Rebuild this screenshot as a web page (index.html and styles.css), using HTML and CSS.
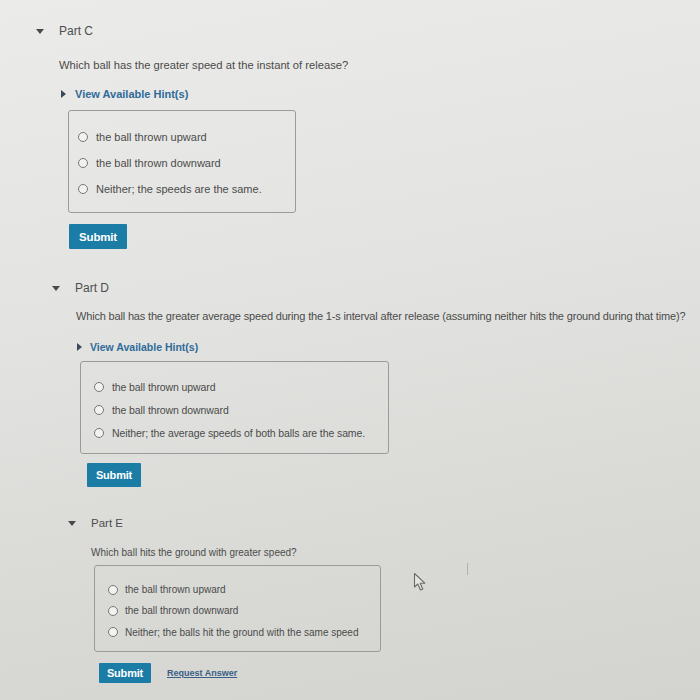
FILE: index.html
```html
<!DOCTYPE html>
<html>
<head>
<meta charset="utf-8">
<link rel="stylesheet" href="styles.css">
</head>
<body>
<div class="page">
  <section class="part part-c">
    <div class="part-head"><span class="caret"></span><span class="part-title">Part C</span></div>
    <div class="part-body">
      <p class="question">Which ball has the greater speed at the instant of release?</p>
      <div class="hint"><span class="hint-arrow"></span><span class="hint-text">View Available Hint(s)</span></div>
      <div class="choices">
        <label class="choice"><span class="radio"></span><span>the ball thrown upward</span></label>
        <label class="choice"><span class="radio"></span><span>the ball thrown downward</span></label>
        <label class="choice"><span class="radio"></span><span>Neither; the speeds are the same.</span></label>
      </div>
      <div class="actions"><button class="submit">Submit</button></div>
    </div>
  </section>

  <section class="part part-d">
    <div class="part-head"><span class="caret"></span><span class="part-title">Part D</span></div>
    <div class="part-body">
      <p class="question">Which ball has the greater average speed during the 1-s interval after release (assuming neither hits the ground during that time)?</p>
      <div class="hint"><span class="hint-arrow"></span><span class="hint-text">View Available Hint(s)</span></div>
      <div class="choices">
        <label class="choice"><span class="radio"></span><span>the ball thrown upward</span></label>
        <label class="choice"><span class="radio"></span><span>the ball thrown downward</span></label>
        <label class="choice"><span class="radio"></span><span>Neither; the average speeds of both balls are the same.</span></label>
      </div>
      <div class="actions"><button class="submit">Submit</button></div>
    </div>
  </section>

  <section class="part part-e">
    <div class="part-head"><span class="caret"></span><span class="part-title">Part E</span></div>
    <div class="part-body">
      <p class="question">Which ball hits the ground with greater speed?</p>
      <div class="choices">
        <label class="choice"><span class="radio"></span><span>the ball thrown upward</span></label>
        <label class="choice"><span class="radio"></span><span>the ball thrown downward</span></label>
        <label class="choice"><span class="radio"></span><span>Neither; the balls hit the ground with the same speed</span></label>
      </div>
      <div class="actions"><button class="submit">Submit</button><a class="request">Request Answer</a></div>
    </div>
  </section>

  <svg class="cursor" width="14" height="20" viewBox="0 0 14 20"><path d="M1.5 1.5 L1.5 15 L4.8 12 L7.5 18 L9.8 17 L7.2 11.2 L11.8 11.2 Z" fill="#e4e5e2" stroke="#6a6b6a" stroke-width="1.1" stroke-linejoin="round"/></svg>
  <span class="tick"></span>
</div>
</body>
</html>
```

FILE: styles.css
```css
html, body {
  margin: 0;
  padding: 0;
}
body {
  width: 700px;
  height: 700px;
  overflow: hidden;
  background: linear-gradient(170deg, #ebebe9 0%, #e3e4e1 40%, #d9dad6 75%, #d3d4d0 100%);
  font-family: "Liberation Sans", Arial, sans-serif;
  color: #4b4b4b;
}
.page {
  position: relative;
  width: 700px;
  height: 700px;
}
.part {
  display: flex;
  flex-direction: column;
}
.part-head {
  display: flex;
  align-items: center;
  height: 20px;
}
.caret {
  width: 0;
  height: 0;
  border-left: 4px solid transparent;
  border-right: 4px solid transparent;
  border-top: 5px solid #4a4a4a;
}
.part-title {
  font-size: 12px;
  color: #4e4e4e;
}
.question {
  margin: 0;
  line-height: 16px;
  white-space: nowrap;
}
.hint {
  display: flex;
  align-items: center;
  height: 16px;
}
.hint-arrow {
  width: 0;
  height: 0;
  border-top: 4px solid transparent;
  border-bottom: 4px solid transparent;
  border-left: 5px solid #3b4a5a;
}
.hint-text {
  color: #2f6b9a;
  font-weight: bold;
}
.choices {
  display: flex;
  flex-direction: column;
  border: 1px solid #9b9c9a;
  border-radius: 3px;
  box-sizing: border-box;
}
.choice {
  display: flex;
  align-items: center;
  height: 16px;
  white-space: nowrap;
}
.radio {
  width: 8px;
  height: 8px;
  border: 1px solid #767776;
  border-radius: 50%;
  background: #f2f2f0;
  flex: none;
}
.actions {
  display: flex;
  align-items: center;
}
.submit {
  border: none;
  border-radius: 1px;
  background: #1b7ca6;
  color: #ffffff;
  font-family: "Liberation Sans", Arial, sans-serif;
  font-weight: bold;
  padding: 0;
  letter-spacing: -0.2px;
}
.request {
  color: #3a5f86;
  font-weight: bold;
  text-decoration: underline;
}

/* Part C */
.part-c { padding: 21px 0 0 36px; }
.part-c .caret { margin-right: 15px; }
.part-c .part-body { padding-left: 23px; font-size: 11.2px; }
.part-c .question { margin-top: 16px; }
.part-c .hint { margin: 13px 0 0 2px; }
.part-c .hint-arrow { margin-right: 9px; }
.part-c .hint-text { font-size: 11px; }
.part-c .choices { margin: 8px 0 0 9px; width: 228px; padding: 18px 0 15px 9px; gap: 11px; height: 103px; font-size: 11px; }
.part-c .radio { margin-right: 8px; }
.part-c .actions { margin: 11px 0 0 10px; }
.part-c .submit { width: 58px; height: 25px; font-size: 11.5px; }

/* Part D */
.part-d { padding: 29px 0 0 52px; }
.part-d .caret { margin-right: 15px; }
.part-d .part-body { padding-left: 24px; font-size: 11px; }
.part-d .question { margin-top: 10px; letter-spacing: -0.17px; }
.part-d .hint { margin: 15px 0 0 1px; }
.part-d .hint-arrow { margin-right: 8px; }
.part-d .hint-text { font-size: 10.5px; }
.part-d .choices { margin: 6px 0 0 4px; width: 309px; padding: 17px 0 12px 13px; gap: 8px; height: 93px; font-size: 10.5px; letter-spacing: -0.1px; }
.part-d .radio { margin-right: 8px; }
.part-d .actions { margin: 9px 0 0 11px; }
.part-d .submit { width: 54px; height: 24px; font-size: 11px; }

/* Part E */
.part-e { padding: 26px 0 0 68px; }
.part-e .caret { margin-right: 15px; }
.part-e .part-title { font-size: 11.5px; }
.part-e .part-body { padding-left: 23px; font-size: 10px; }
.part-e .question { margin-top: 12px; }
.part-e .choices { margin: 4px 0 0 3px; width: 287px; padding: 16px 0 11px 13px; gap: 6px; height: 87px; font-size: 10px; }
.part-e .radio { margin-right: 7px; }
.part-e .actions { margin: 11px 0 0 8px; }
.part-e .submit { width: 52px; height: 20px; font-size: 11px; }
.part-e .request { margin-left: 16px; font-size: 9px; }

.cursor {
  position: absolute;
  left: 413px;
  top: 572px;
}
.tick {
  position: absolute;
  left: 467px;
  top: 563px;
  width: 1px;
  height: 12px;
  background: #b0b1ae;
}
```
